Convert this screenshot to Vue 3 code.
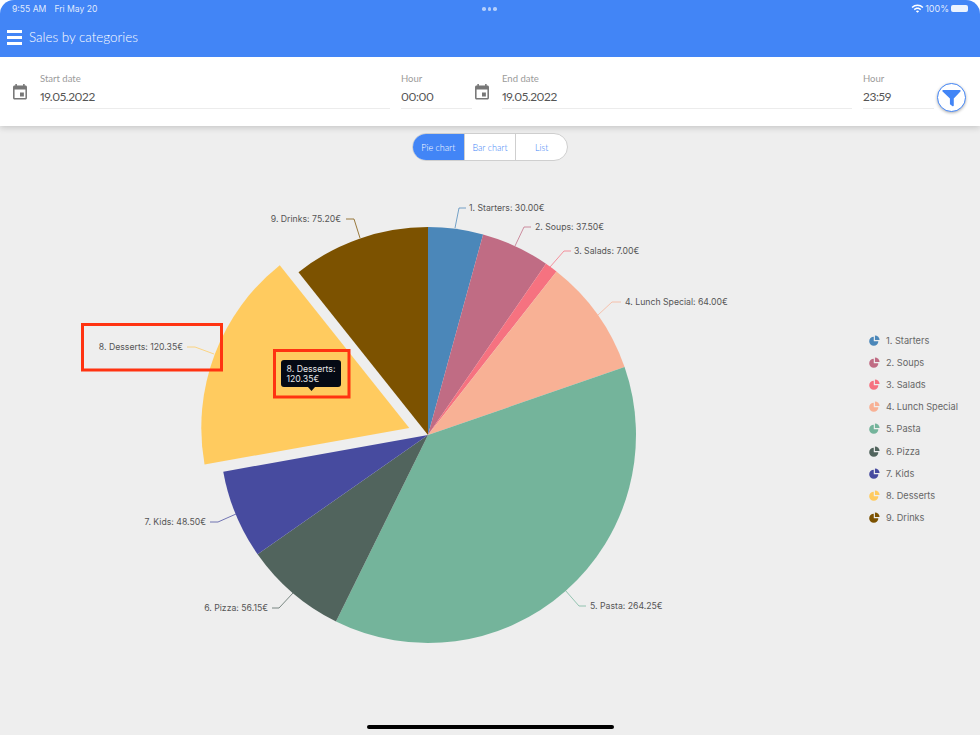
<template>
  <div class="screen">
    <header class="topbar">
      <div class="status">
        <span class="time">9:55 AM</span>
        <span>Fri May 20</span>
        <div class="dots"><i></i><i></i><i></i></div>
        <svg class="wifi" viewBox="0 0 24 24" width="13" height="13">
          <path fill="#fff" d="M1 9l2 2c4.97-4.97 13.03-4.97 18 0l2-2C16.93 2.93 7.08 2.93 1 9zm8 8l3 3 3-3c-1.65-1.66-4.34-1.66-6 0zm-4-4l2 2c2.76-2.76 7.24-2.76 10 0l2-2C15.14 9.14 8.87 9.14 5 13z" />
        </svg>
        <span class="percent">100%</span>
        <div class="battery"><b></b></div>
      </div>
      <div class="title-row">
        <div class="burger"><i></i><i></i><i></i></div>
        <h1>Sales by categories</h1>
      </div>
    </header>

    <section class="filters">
      <template v-for="f in fields" :key="f.label + f.value">
        <svg v-if="f.icon" class="cal" :class="{ second: f.second }" viewBox="3 1 18 20" width="14" height="15.500">
          <path fill="#777" d="M17 12h-5v5h5v-5zM16 1v2H8V1H6v2H5c-1.11 0-1.99.9-1.99 2L3 19c0 1.1.89 2 2 2h14c1.1 0 2-.9 2-2V5c0-1.1-.9-2-2-2h-1V1h-2zm3 18H5V8h14v11z" />
        </svg>
        <div class="field" :class="f.icon ? 'date' : 'hour'">
          <label>{{ f.label }}</label>
          <div class="value">{{ f.value }}</div>
        </div>
      </template>
      <button class="filter-btn">
        <svg viewBox="0 0 24 24" width="21" height="21">
          <path fill="#4285f6" d="M2.5 3.5h19c.9 0 1.3 1 .7 1.7L14.6 13v8.2c0 .7-.8 1.1-1.4.7l-2.6-2c-.3-.2-.4-.5-.4-.8V13L1.800 5.200c-.6-.7-.2-1.700.7-1.700z" />
        </svg>
      </button>
    </section>

    <nav class="tabs">
      <a class="active">Pie chart</a>
      <a>Bar chart</a>
      <a>List</a>
    </nav>

    <main class="chart-row">
      <svg class="chart" width="850" height="565" viewBox="0 170 850 565">
        <path v-for="s in slices" :key="s.name" :d="s.path" :fill="s.color" />
        <g v-for="s in slices" :key="s.name + 'label'">
          <polyline :points="s.line" fill="none" :stroke="s.color" stroke-width="1" stroke-opacity="0.75" />
          <text class="pie-label" :x="s.tx" :y="s.ty + 3.3" :text-anchor="s.anchor">{{ s.name }}: {{ s.amount }}€</text>
        </g>

        <path class="tip" d="M284 360h54a3 3 0 0 1 3 3v21a3 3 0 0 1-3 3h-23l-3.500 4-3.500-4h-24a3 3 0 0 1-3-3v-21a3 3 0 0 1 3-3z" />
        <text class="tip-text" x="286.500" y="372">8. Desserts:</text>
        <text class="tip-text" x="286.500" y="381.800">120.35€</text>

        <rect class="mark" x="82.500" y="324.500" width="139" height="45.500" />
        <rect class="mark" x="274.500" y="350.500" width="74.500" height="46.500" />
      </svg>

      <ul class="legend">
        <li v-for="s in slices" :key="s.name">
          <svg viewBox="0 0 12 12" width="11" height="11">
            <path :fill="s.color" d="M5.200 1.800A5 5 0 1 0 10.200 6.800H5.200z" />
            <path :fill="s.color" d="M6.500 0.500A5 5 0 0 1 11.500 5.500H6.500z" />
          </svg>
          {{ s.name }}
        </li>
      </ul>
    </main>

    <div class="home-bar"></div>
  </div>
</template>

<script setup>
const fields = [
  { label: 'Start date', value: '19.05.2022', icon: true },
  { label: 'Hour', value: '00:00' },
  { label: 'End date', value: '19.05.2022', icon: true, second: true },
  { label: 'Hour', value: '23:59' }
]

const data = [
  { name: '1. Starters', value: 30, amount: '30.00', color: '#4b87b9', line: '455,228 459,208 466,208', tx: 469, ty: 208 },
  { name: '2. Soups', value: 37.5, amount: '37.50', color: '#c06c84', line: '515,246 524,227 531,227', tx: 535, ty: 227 },
  { name: '3. Salads', value: 7, amount: '7.00', color: '#f67280', line: '550,267 564,251 571,251', tx: 574, ty: 251 },
  { name: '4. Lunch Special', value: 64, amount: '64.00', color: '#f8b195', line: '598,315 612,302 621,302', tx: 625, ty: 302 },
  { name: '5. Pasta', value: 264.25, amount: '264.25', color: '#74b49b', line: '565,590 579,606 586,606', tx: 590, ty: 606 },
  { name: '6. Pizza', value: 56.15, amount: '56.15', color: '#51645d', line: '293,593 279,608 272,608', tx: 268, ty: 608, anchor: 'end' },
  { name: '7. Kids', value: 48.5, amount: '48.50', color: '#474b9f', line: '236,514 218,522 210,522', tx: 206, ty: 522, anchor: 'end' },
  { name: '8. Desserts', value: 120.35, amount: '120.35', color: '#ffcb5f', line: '214,354 195,347 187,347', tx: 183, ty: 347, anchor: 'end', pull: 20 },
  { name: '9. Drinks', value: 75.2, amount: '75.20', color: '#7c5200', line: '360,238 354,219 346,219', tx: 341, ty: 219, anchor: 'end' }
]

const cx = 428
const cy = 435
const radius = 208
const total = data.reduce((sum, d) => sum + d.value, 0)

let used = 0
const slices = data.map((d) => {
  const start = (used / total) * Math.PI * 2
  used += d.value
  const end = (used / total) * Math.PI * 2
  const mid = (start + end) / 2
  const ox = cx + Math.sin(mid) * (d.pull || 0)
  const oy = cy - Math.cos(mid) * (d.pull || 0)
  const x1 = ox + Math.sin(start) * radius
  const y1 = oy - Math.cos(start) * radius
  const x2 = ox + Math.sin(end) * radius
  const y2 = oy - Math.cos(end) * radius
  const big = end - start > Math.PI ? 1 : 0
  return {
    ...d,
    anchor: d.anchor || 'start',
    path: `M${ox} ${oy}L${x1} ${y1}A${radius} ${radius} 0 ${big} 1 ${x2} ${y2}Z`
  }
})
</script>

<style scoped>
.screen {
  position: relative;
  width: 980px;
  height: 735px;
  overflow: hidden;
  display: flex;
  flex-direction: column;
  background: #eeeeee;
  font-family: Inter, 'Liberation Sans', sans-serif;
}
.topbar {
  height: 57px;
  flex: none;
  background: #4285f6;
  color: #fff;
  border-radius: 14px 14px 0 0;
  box-shadow: 0 0 0 20px #fff;
  clip-path: inset(0 0 -6px 0);
  position: relative;
  z-index: 2;
}
.status {
  display: flex;
  align-items: center;
  height: 17px;
  padding: 0 12px;
  font-size: 8.600px;
  color: rgba(255, 255, 255, 0.85);
}
.time {
  margin-right: 8px;
}
.dots {
  position: absolute;
  left: 482px;
  top: 7px;
  display: flex;
  gap: 2px;
}
.dots i {
  width: 3.5px;
  height: 3.5px;
  border-radius: 50%;
  background: rgba(255, 255, 255, 0.6);
}
.wifi {
  margin-left: auto;
  margin-right: 1px;
}
.percent {
  margin-right: 2px;
  font-size: 9px;
}
.battery {
  width: 17px;
  height: 7px;
  padding: 1px;
  box-sizing: border-box;
  border-radius: 2px;
  background: rgba(255, 255, 255, 0.9);
}
.title-row {
  display: flex;
  align-items: center;
  height: 40px;
  padding-left: 7px;
}
.burger {
  width: 15px;
  display: flex;
  flex-direction: column;
  gap: 3px;
  margin-right: 7px;
}
.burger i {
  height: 3px;
  background: #fff;
}
h1 {
  margin: 0;
  font-family: Lato, sans-serif;
  font-size: 13.400px;
  font-weight: 300;
  color: #fff;
}
.filters {
  height: 69px;
  flex: none;
  display: flex;
  align-items: flex-start;
  background: #fff;
  padding: 16px 0 0 13px;
  box-sizing: border-box;
  box-shadow: 0 2px 6px rgba(0, 0, 0, 0.16);
  position: relative;
  z-index: 1;
}
.cal {
  flex: none;
  margin: 11px 13px 0 0;
}
.cal.second {
  margin-left: 3px;
}
.field {
  border-bottom: 1px solid #ececec;
  height: 35px;
  color: #555;
}
.field.date {
  width: 350px;
}
.field.hour {
  width: 71px;
  margin-left: 11px;
}
.field label {
  display: block;
  font-family: Lato, sans-serif;
  font-size: 9.500px;
  line-height: 11px;
  color: #9b9b9b;
}
.value {
  margin-top: 6px;
  font-family: Lato, sans-serif;
  font-size: 12px;
  line-height: 14px;
  letter-spacing: -0.4px;
  font-variant-numeric: proportional-nums;
}
.filter-btn {
  width: 29px;
  height: 29px;
  flex: none;
  margin: 10px 0 0 3px;
  padding: 0;
  display: flex;
  align-items: center;
  justify-content: center;
  background: #fff;
  border: 1.500px solid #4285f6;
  border-radius: 50%;
  box-shadow: 0 1px 3px rgba(0, 0, 0, 0.3);
}
.tabs {
  flex: none;
  align-self: center;
  margin-top: 7px;
  display: flex;
  width: 156px;
  height: 28px;
  box-sizing: border-box;
  border: 1px solid #cfcfcf;
  border-radius: 14px;
  overflow: hidden;
  background: #fff;
  font-family: Lato, sans-serif;
  font-size: 9px;
  font-weight: 300;
}
.tabs a {
  flex: 1;
  display: flex;
  align-items: center;
  justify-content: center;
  color: #4285f6;
  border-left: 1px solid #cfcfcf;
}
.tabs a.active {
  border-left: 0;
  background: #4285f6;
  color: #fff;
}
.chart-row {
  flex: none;
  display: flex;
  margin-top: 9px;
}
.chart {
  flex: none;
  display: block;
}
.pie-label {
  font-size: 8.700px;
  fill: #555;
}
.tip {
  fill: #050a14;
}
.tip-text {
  font-size: 8.700px;
  fill: #e6e6e6;
}
.mark {
  fill: none;
  stroke: #ff3311;
  stroke-width: 3;
}
.legend {
  list-style: none;
  margin: 159px 0 0 19px;
  padding: 0;
  font-size: 9.200px;
  color: #666;
}
.legend li {
  display: flex;
  align-items: center;
  gap: 6px;
  height: 22.200px;
  white-space: nowrap;
}
.home-bar {
  position: absolute;
  left: 367px;
  bottom: 6px;
  width: 247px;
  height: 4px;
  border-radius: 2px;
  background: #000;
}
</style>

<style>
html,
body {
  background: #fff;
}
</style>
